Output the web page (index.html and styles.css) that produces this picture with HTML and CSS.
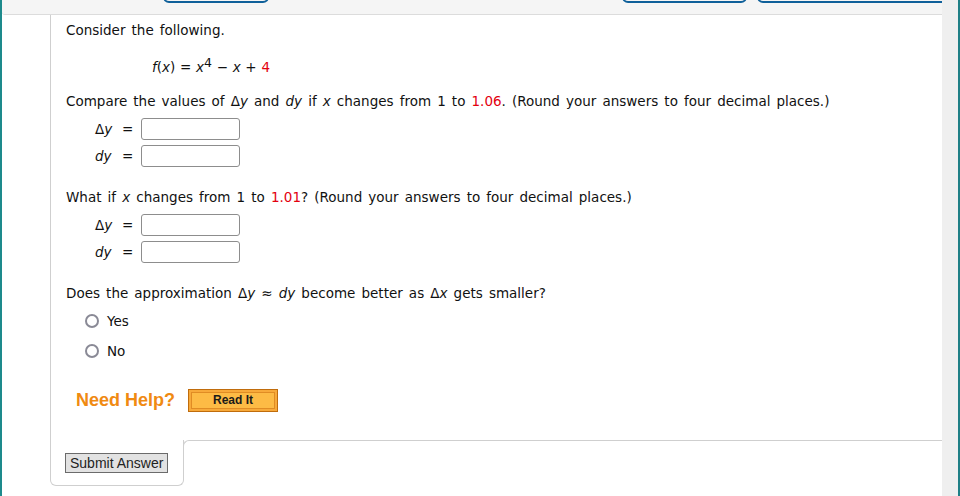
FILE: index.html
```html
<!DOCTYPE html>
<html>
<head>
<meta charset="utf-8">
<link rel="stylesheet" href="styles.css">
</head>
<body>
<div class="page">
  <div class="main">
    <div class="topbar">
      <span class="tbtn tbtn-a"></span>
      <span class="tbtn tbtn-b"></span>
      <span class="tbtn tbtn-c"></span>
    </div>
    <div class="question">
      <p class="line first">Consider the following.</p>
      <p class="line formula"><i>f</i>(<i>x</i>) = <i>x</i><sup>4</sup> − <i>x</i> + <span class="red">4</span></p>
      <p class="line gap16">Compare the values of Δ<i>y</i> and <i>dy</i> if <i>x</i> changes from 1 to <span class="red">1.06</span>. (Round your answers to four decimal places.)</p>
      <div class="ansrow gap8"><span class="lbl">Δ<i>y</i></span><span class="eq">=</span><span class="box"></span></div>
      <div class="ansrow gap5"><span class="lbl"><i>dy</i></span><span class="eq">=</span><span class="box"></span></div>
      <p class="line gap21">What if <i>x</i> changes from 1 to <span class="red">1.01</span>? (Round your answers to four decimal places.)</p>
      <div class="ansrow gap8"><span class="lbl">Δ<i>y</i></span><span class="eq">=</span><span class="box"></span></div>
      <div class="ansrow gap5"><span class="lbl"><i>dy</i></span><span class="eq">=</span><span class="box"></span></div>
      <p class="line gap21">Does the approximation Δ<i>y</i> ≈ <i>dy</i> become better as Δ<i>x</i> gets smaller?</p>
      <div class="choice gap10"><span class="radio"></span><span>Yes</span></div>
      <div class="choice gap12"><span class="radio"></span><span>No</span></div>
      <div class="help"><span class="needhelp">Need Help?</span><span class="readit"><span class="readit-in">Read It</span></span></div>
    </div>
    <div class="footer">
      <div class="submitcell"><span class="submit">Submit Answer</span></div>
      <div class="restcell"></div>
    </div>
  </div>
  <div class="scroll"></div>
</div>
</body>
</html>
```
FILE: styles.css
```css
html, body {
  margin: 0;
  padding: 0;
  background: #fff;
}
body {
  font-family: "DejaVu Sans", Verdana, sans-serif;
  font-size: 13.5px;
  word-spacing: 1.8px;
  color: #111;
}
.page {
  display: flex;
  width: 960px;
  height: 496px;
  border-left: 2px solid #1d8a8c;
  border-right: 2px solid #1f7f86;
  box-sizing: border-box;
  overflow: hidden;
}
.main {
  width: 940px;
  display: flex;
  flex-direction: column;
}
.scroll {
  flex: 1;
  background: #efefef;
}
.topbar {
  height: 14px;
  background: #f5f5f5;
  border-bottom: 1px solid #dcdcdc;
  border-bottom-left-radius: 3px;
  display: flex;
  align-items: flex-start;
  overflow: hidden;
}
.tbtn {
  display: block;
  height: 20px;
  margin-top: -17px;
  border: 2px solid #0f609a;
  border-radius: 6px;
  box-sizing: border-box;
  flex-shrink: 0;
}
.tbtn-a { margin-left: 161px; width: 106px; }
.tbtn-b { margin-left: 353px; width: 125px; }
.tbtn-c { margin-left: 10px; width: 220px; }
.question {
  margin-left: 48px;
  border-left: 1px solid #cfcfcf;
  padding-left: 15px;
  padding-top: 6px;
  height: 425px;
  box-sizing: border-box;
}
.line {
  margin: 0;
  line-height: 18px;
  white-space: nowrap;
}
.formula {
  margin-top: 19px;
  padding-left: 86px;
  word-spacing: 0.4px;
}
.formula sup {
  font-size: 12.5px;
  vertical-align: 5px;
  line-height: 0;
}
.red { color: #e3000f; }
.gap5 { margin-top: 5px; }
.gap8 { margin-top: 8px; }
.gap10 { margin-top: 10px; }
.gap12 { margin-top: 12px; }
.gap16 { margin-top: 16px; }
.gap21 { margin-top: 21px; }
.ansrow {
  display: flex;
  align-items: center;
  height: 22px;
  padding-left: 29px;
}
.lbl { width: 27px; }
.eq { width: 19px; }
.box {
  width: 99px;
  height: 22px;
  box-sizing: border-box;
  border: 1px solid #8d8d8d;
  border-radius: 3px;
  background: #fff;
}
.choice {
  display: flex;
  align-items: center;
  height: 18px;
  padding-left: 19px;
}
.radio {
  width: 14px;
  height: 14px;
  box-sizing: border-box;
  border: 2px solid #8a8a96;
  border-radius: 50%;
  margin-right: 8px;
}
.help {
  display: flex;
  align-items: center;
  margin-top: 29px;
  height: 22px;
  padding-left: 10px;
  word-spacing: 0;
}
.needhelp {
  font-family: "Liberation Sans", Arial, sans-serif;
  font-weight: bold;
  font-size: 18px;
  color: #f08a12;
  margin-right: 13px;
}
.readit {
  display: block;
  width: 90px;
  height: 23px;
  box-sizing: border-box;
  border: 1px solid #c06c0c;
  background: #f7a93a;
  padding: 2px;
}
.readit-in {
  display: block;
  height: 100%;
  box-sizing: border-box;
  border: 1px solid #e08c24;
  background: #fdbb45;
  font-family: "Liberation Sans", Arial, sans-serif;
  font-weight: bold;
  font-size: 12px;
  line-height: 15px;
  text-align: center;
  color: #1a1a1a;
}
.footer {
  display: flex;
  align-items: flex-start;
  word-spacing: 0;
}
.submitcell {
  margin-left: 48px;
  width: 134px;
  height: 46px;
  box-sizing: border-box;
  border: 1px solid #cfcfcf;
  border-top: none;
  border-radius: 0 0 6px 6px;
  padding: 13px 0 0 14px;
}
.submit {
  display: inline-block;
  font-family: "Liberation Sans", Arial, sans-serif;
  font-size: 14px;
  line-height: 18px;
  padding: 0 4px;
  background: #e2e2e2;
  border: 1px solid #6b6b6b;
  color: #222;
}
.restcell {
  flex: 1;
  height: 12px;
  margin-left: -1px;
  border-top: 1px solid #cfcfcf;
  border-left: 1px solid #cfcfcf;
  border-top-left-radius: 6px;
}
```
